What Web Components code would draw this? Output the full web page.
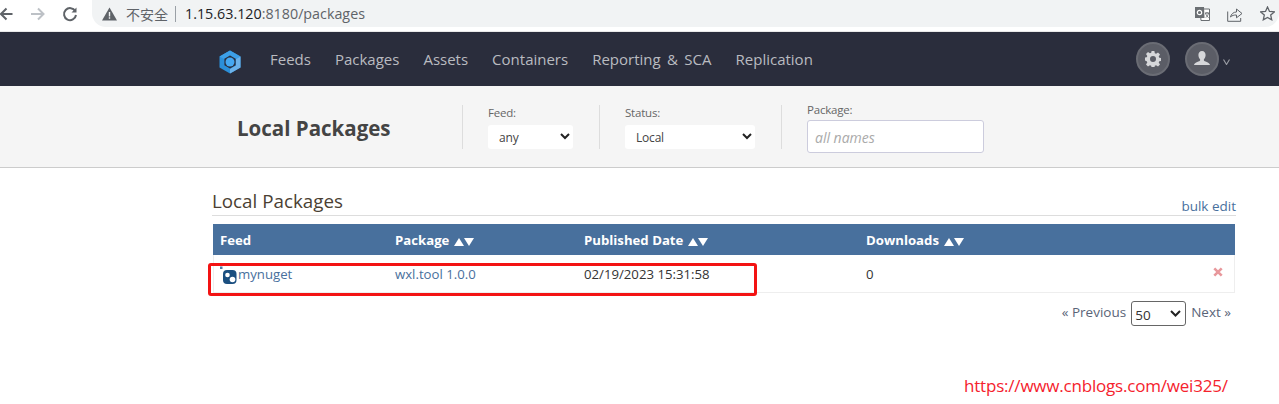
<!DOCTYPE html>
<html>
<head>
<meta charset="utf-8">
<title>Local Packages</title>
<style>
    html, body { margin: 0; padding: 0; background: #fff; height: 404px; overflow: hidden; }
    body { font-family: "Open Sans", "Noto Sans CJK SC", sans-serif; position: relative; }
</style>
</head>
<body>
<browser-bar></browser-bar>
<app-nav></app-nav>
<filter-bar></filter-bar>
<packages-panel></packages-panel>
<red-mark></red-mark>
<site-credit>https://www.cnblogs.com/wei325/</site-credit>

<script>
class BrowserBar extends HTMLElement {
    constructor() {
        super();
        this.attachShadow({ mode: 'open' });
        this.shadowRoot.innerHTML = `
            <style>
                :host { display: flex; align-items: flex-start; height: 32px; box-sizing: border-box; background: #fff; border-bottom: 1px solid #e8e8e8; }
                .btns { display: flex; width: 92px; height: 27px; align-items: center; flex: none; }
                .btns svg { display: block; flex: none; }
                .pill { flex: 1; height: 27px; background: #f1f3f4; border-radius: 0 0 14px 14px; display: flex; align-items: center; padding-left: 10px; font: 14.300px "Open Sans", "Noto Sans CJK SC", sans-serif; color: #5f6368; }
                .warn { margin-right: 9px; flex: none; }
                .sep { width: 1px; height: 16px; background: #9aa0a6; margin: 0 9px 0 7px; }
                .host { color: #202124; }
                .url { flex: 1; white-space: nowrap; }
                .tail { display: flex; align-items: center; gap: 17px; padding-right: 4px; }
                .cn { font-size: 14px; }
            </style>
            <div class="btns">
                <svg width="14" height="14" viewBox="0 0 14 14" style="margin-left:-1px"><path d="M13.500 7H2.500M7.500 1.500 2 7l5.500 5.500" fill="none" stroke="#5f6368" stroke-width="2"/></svg>
                <svg width="16" height="14" viewBox="0 0 16 14" style="margin-left:17px"><path d="M1 7h12M8 1.500 13.500 7 8 12.500" fill="none" stroke="#bdc1c6" stroke-width="2"/></svg>
                <svg width="16" height="16" viewBox="0 0 16 16" style="margin-left:16px"><path d="M13.300 5.200A6 6 0 1 0 14 9" fill="none" stroke="#5f6368" stroke-width="2"/><path d="M14.500 1.500v5h-5z" fill="#5f6368"/></svg>
            </div>
            <div class="pill">
                <svg class="warn" width="15" height="14" viewBox="0 0 15 14"><path d="M7.500 0.500 15 13.500H0z" fill="#5f6368"/><path d="M6.800 5h1.400v4.500H6.800zM6.800 10.300h1.400v1.500H6.800z" fill="#f1f3f4"/></svg>
                <span class="cn">不安全</span><span class="sep"></span>
                <span class="url"><span class="host">1.15.63.120</span>:8180/packages</span>
                <div class="tail">
                    <svg width="15" height="14" viewBox="0 0 15 14"><path d="M5 2h9.500v11.500H6z" fill="#fff" stroke="#6b6f73"/><path d="M0 0h9l.5 11H0z" fill="#6b6f73"/><circle cx="4.500" cy="5.500" r="2.200" fill="none" stroke="#fff" stroke-width="1.200"/><path d="M10 6h4M12 5v1M10.500 6c.5 2 1.500 3.500 3 4.500M13.500 6c-.4 2-1 3-2.500 4.500" fill="none" stroke="#6b6f73"/></svg>
                    <svg width="16" height="16" viewBox="0 0 16 16"><path d="M.7 5.500v9.800h13V12" fill="none" stroke="#5f6368"/><path d="M3.500 11c.6-3 3-5 6-5V3l5.500 4.500-5.500 4.300V9c-2.500-.1-4.500.5-6 2z" fill="none" stroke="#5f6368"/></svg>
                    <svg width="15" height="15" viewBox="0 0 15 15"><path d="M7.500 1l2 4.400 4.800.5-3.600 3.200 1 4.700-4.200-2.400-4.200 2.400 1-4.700L.7 5.900l4.800-.5z" fill="none" stroke="#5f6368" stroke-width="1.300"/></svg>
                </div>
            </div>
        `;
    }
}

class AppNav extends HTMLElement {
    constructor() {
        super();
        this.attachShadow({ mode: 'open' });
        const links = ['Feeds', 'Packages', 'Assets', 'Containers', 'Reporting &amp; SCA', 'Replication'];
        this.shadowRoot.innerHTML = `
            <style>
                :host { display: flex; align-items: center; height: 54px; background: #2a2d3c; padding-left: 218px; padding-right: 49px; font-size: 15px; color: #b9bbc0; }
                .logo { flex: none; display: block; margin: 5px 28px 0 0; }
                nav { display: flex; gap: 24px; flex: 1; word-spacing: 2.500px; margin-top: -1px; }
                .round { width: 34px; height: 34px; box-sizing: border-box; border-radius: 50%; background: #5b5d66; border: 2px solid #6a6c74; display: flex; align-items: center; justify-content: center; flex: none; }
                .gap { width: 15px; }
                .caret { margin: 6px 0 0 4px; }
            </style>
            <svg class="logo" width="24" height="24" viewBox="0 0 24 24">
                <path d="M12 .5 22.500 6.500v11L12 23.500 1.500 17.500v-11z" fill="#2b8fd9"/>
                <path d="M12 .5 22.500 6.500 18 9 12 5.500 6 9 1.500 6.500z" fill="#3d9fe6"/>
                <path d="M22.500 6.500v11L12 23.500V19l6-3.500V9z" fill="#6cb2ea"/>
                <path d="M12 5.500 17.600 8.750v6.500L12 18.500l-5.600-3.250v-6.500z" fill="#2a2d3c"/>
                <circle cx="12" cy="12" r="4.500" fill="#45a8f2"/>
            </svg>
            <nav>${links.map(l => `<span>${l}</span>`).join('')}</nav>
            <div class="round">
                <svg width="16" height="16" viewBox="0 0 16 16"><path fill="#d6d7da" fill-rule="evenodd" d="M6.600 0h2.800l.4 2.200 1.300.6 1.900-1.300 2 2-1.300 1.900.6 1.300 2.200.4v2.800l-2.200.4-.6 1.300 1.300 1.900-2 2-1.900-1.300-1.300.6-.4 2.200H6.600l-.4-2.200-1.300-.6L3 15.500l-2-2 1.300-1.900-.6-1.300L-.5 9.400V6.600l2.200-.4.6-1.300L1 3l2-2 1.900 1.300 1.300-.6zM8 5a3 3 0 1 0 0 6 3 3 0 0 0 0-6z"/></svg>
            </div>
            <div class="gap"></div>
            <div class="round">
                <svg width="18" height="18" viewBox="0 0 18 18"><path fill="#d6d7da" d="M9 1c2.300 0 3.600 1.700 3.600 4 0 1.800-.8 3.300-1.700 4.200v1.300c0 .8 5.600 1.800 6.100 4.500H1c.5-2.700 6.100-3.700 6.100-4.500V9.200C6.200 8.300 5.400 6.800 5.400 5 5.400 2.700 6.700 1 9 1z"/></svg>
            </div>
            <svg class="caret" width="7" height="6" viewBox="0 0 7 6"><path d="M.5.500 3.500 5.500 6.500.500" fill="none" stroke="#9c9ea5" stroke-width="1.100"/></svg>
        `;
    }
}

class FilterField extends HTMLElement {
    constructor() {
        super();
        this.attachShadow({ mode: 'open' });
        this.shadowRoot.innerHTML = `
            <style>
                :host { display: block; font-size: 11.500px; color: #666; }
                label { display: block; letter-spacing: -.2px; line-height: 14px; margin-bottom: var(--label-gap, 5px); }
            </style>
            <label>${this.getAttribute('label')}</label>
            <slot></slot>
        `;
    }
}

class FilterBar extends HTMLElement {
    constructor() {
        super();
        this.attachShadow({ mode: 'open' });
        this.shadowRoot.innerHTML = `
            <style>
                :host { display: flex; align-items: center; height: 82px; box-sizing: border-box; background: #f5f5f5; border-bottom: 1px solid #ccc; padding-left: 237px; font-size: 12px; }
                h1 { margin: 2px 0 0; font-size: 20.500px; font-weight: 700; color: #444; width: 225px; white-space: nowrap; flex: none; }
                .cell { border-left: 1px solid #ddd; height: 44px; box-sizing: border-box; padding: 1px 0 0 25px; flex: none; }
                .feed { width: 137px; }
                .status { width: 182px; }
                select { display: block; appearance: none; box-sizing: border-box; height: 24px; border: 0; border-radius: 3px; background: #fff; font: 12px "Open Sans", sans-serif; color: #444; padding: 2px 0 0 11px; margin: 0; letter-spacing: -.2px; }
                .pick { position: relative; width: fit-content; }
                .pick svg { position: absolute; right: 3px; top: 8px; pointer-events: none; }
                input { display: block; box-sizing: border-box; width: 177px; height: 33px; border: 1px solid #ccd; border-radius: 3px; background: #fff; padding: 2px 7px 0; font: italic 14px "Open Sans", sans-serif; margin: 0; }
                input::placeholder { color: #aaa; opacity: 1; }
                .pkg { margin-top: -3px; --label-gap: 3px; }
            </style>
            <h1>Local Packages</h1>
            <div class="cell feed">
                <filter-field label="Feed:">
                    <div class="pick"><select style="width:85px"><option>any</option></select>${FilterBar.chevron}</div>
                </filter-field>
            </div>
            <div class="cell status">
                <filter-field label="Status:">
                    <div class="pick"><select style="width:130px"><option>Local</option></select>${FilterBar.chevron}</div>
                </filter-field>
            </div>
            <div class="cell">
                <filter-field class="pkg" label="Package:">
                    <input placeholder="all names">
                </filter-field>
            </div>
        `;
    }
    static get chevron() {
        return '<svg width="10" height="7" viewBox="0 0 10 7"><path d="M1 1l4 4 4-4" fill="none" stroke="#222" stroke-width="2"/></svg>';
    }
}

class PackagesPanel extends HTMLElement {
    constructor() {
        super();
        this.attachShadow({ mode: 'open' });
        const sort = '<span class="sort"><i></i><b></b></span>';
        this.shadowRoot.innerHTML = `
            <style>
                :host { display: block; margin: 21px 43px 0 212px; font-size: 13.200px; color: #333; }
                .head { display: flex; align-items: flex-end; justify-content: space-between; border-bottom: 1px solid #ddd; height: 26px; }
                h2 { margin: 0 0 1px; font-size: 18.800px; font-weight: 400; color: #4b3f33; line-height: 26px; }
                .bulk { color: #48709d; line-height: 18px; font-size: 13.500px; }
                .grid { margin: 8px 1px 0 1px; }
                .row { display: grid; grid-template-columns: 175px 189px 282px 1fr 23px; align-items: center; padding-left: 7px; }
                .row.top { height: 31px; background: #48709d; color: #fff; font-weight: 700; font-size: 13.200px; }
                .row.body { height: 38px; padding-left: 6px; box-sizing: border-box; border: 1px solid #eee; border-top: 0; }
                a { color: #48709d; }
                .feed { display: flex; align-items: center; }
                .feed svg { margin: 3px 0 0 0; flex: none; }
                .sort { display: inline-flex; margin-left: 5px; vertical-align: -1px; }
                .sort i { border: 5px solid transparent; border-top: 0; border-bottom: 8px solid #fff; }
                .sort b { border: 5px solid transparent; border-bottom: 0; border-top: 8px solid #fff; }
                .del { justify-self: end; display: block; margin: -3px 11px 0 0; }
                .pager { display: flex; justify-content: flex-end; align-items: center; gap: 5px; margin: 8px 5px 0 0; font-size: 13.500px; color: #5a6478; }
                .pager span { margin-top: -3px; }
                .pick { position: relative; }
                select { display: block; appearance: none; box-sizing: border-box; width: 55px; height: 25px; border: 1px solid #666; border-radius: 3px; background: #fff; font: 13.500px "Open Sans", sans-serif; color: #333; padding: 2px 0 0 3px; margin: 0; }
                .pick svg { position: absolute; right: 5px; top: 9px; pointer-events: none; }
            </style>
            <div class="head"><h2>Local Packages</h2><span class="bulk">bulk edit</span></div>
            <div class="grid">
                <div class="row top"><span>Feed</span><span>Package${sort}</span><span>Published Date${sort}</span><span>Downloads${sort}</span><span></span></div>
                <div class="row body">
                    <span class="feed"><svg width="18" height="18" viewBox="0 0 18 18"><rect x="0" y="0.500" width="2.500" height="2.500" fill="#4f7ba6"/><rect x="3" y="4" width="13.500" height="14" rx="4" fill="#1b4f80"/><circle cx="7.500" cy="9" r="2.300" fill="#fff"/><circle cx="12.500" cy="13.500" r="2.800" fill="#fff"/></svg><a>mynuget</a></span>
                    <a>wxl.tool 1.0.0</a>
                    <span>02/19/2023 15:31:58</span>
                    <span>0</span>
                    <svg class="del" width="10" height="10" viewBox="0 0 10 10"><path d="M1.300 1.300l7.400 7.400M8.700 1.300l-7.400 7.400" stroke="#e8989c" stroke-width="2.600"/></svg>
                </div>
            </div>
            <div class="pager">
                <span>« Previous</span>
                <div class="pick"><select><option>50</option></select><svg width="11" height="7" viewBox="0 0 11 7"><path d="M1 1l4.500 4.500L10 1" fill="none" stroke="#222" stroke-width="2"/></svg></div>
                <span>Next »</span>
            </div>
        `;
    }
}

// the red rectangle someone drew over the screenshot
class RedMark extends HTMLElement {
    constructor() {
        super();
        this.attachShadow({ mode: 'open' });
        this.shadowRoot.innerHTML = `
            <style>
                :host { display: block; position: absolute; left: 208px; top: 263px; width: 549px; height: 33px; box-sizing: border-box; border: 3px solid #f31313; border-radius: 3px; pointer-events: none; }
            </style>
        `;
    }
}

class SiteCredit extends HTMLElement {
    constructor() {
        super();
        this.attachShadow({ mode: 'open' });
        this.shadowRoot.innerHTML = `
            <style>
                :host { display: block; position: absolute; left: 964px; top: 374px; font: 17px "Open Sans", sans-serif; color: #f5222d; white-space: nowrap; letter-spacing: -.2px; }
            </style>
            <slot></slot>
        `;
    }
}

customElements.define('browser-bar', BrowserBar);
customElements.define('app-nav', AppNav);
customElements.define('filter-field', FilterField);
customElements.define('filter-bar', FilterBar);
customElements.define('packages-panel', PackagesPanel);
customElements.define('red-mark', RedMark);
customElements.define('site-credit', SiteCredit);
</script>
</body>
</html>
